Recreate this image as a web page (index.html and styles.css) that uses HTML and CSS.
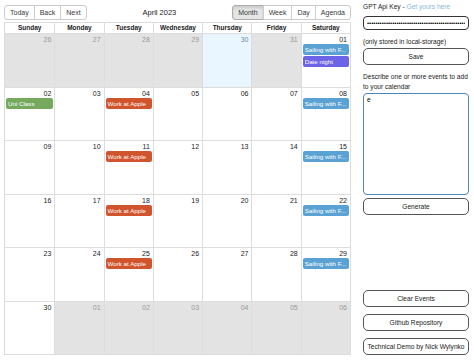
FILE: index.html
```html
<!DOCTYPE html>
<html>
<head>
    <title>GPT Calendar</title>
    <link rel="stylesheet" href="styles.css">
</head>
<body>

<div class="app">
    <div class="calendar">
        <div class="toolbar">
            <span class="btn-group">
                <button>Today</button><button>Back</button><button>Next</button>
            </span>
            <span class="toolbar-label">April 2023</span>
            <span class="btn-group">
                <button class="active">Month</button><button>Week</button><button>Day</button><button>Agenda</button>
            </span>
        </div>

        <div class="month">
            <div class="month-header">
                <div>Sunday</div><div>Monday</div><div>Tuesday</div><div>Wednesday</div>
                <div>Thursday</div><div>Friday</div><div>Saturday</div>
            </div>

            <div class="month-row">
                <div class="day off"><div class="date">26</div></div>
                <div class="day off"><div class="date">27</div></div>
                <div class="day off"><div class="date">28</div></div>
                <div class="day off"><div class="date">29</div></div>
                <div class="day off today"><div class="date">30</div></div>
                <div class="day off"><div class="date">31</div></div>
                <div class="day">
                    <div class="date">01</div>
                    <div class="event sailing" title="Sailing with Friends">Sailing with F...</div>
                    <div class="event date-night">Date night</div>
                </div>
            </div>

            <div class="month-row">
                <div class="day"><div class="date">02</div><div class="event uni">Uni Class</div></div>
                <div class="day"><div class="date">03</div></div>
                <div class="day"><div class="date">04</div><div class="event work">Work at Apple</div></div>
                <div class="day"><div class="date">05</div></div>
                <div class="day"><div class="date">06</div></div>
                <div class="day"><div class="date">07</div></div>
                <div class="day"><div class="date">08</div><div class="event sailing" title="Sailing with Friends">Sailing with F...</div></div>
            </div>

            <div class="month-row">
                <div class="day"><div class="date">09</div></div>
                <div class="day"><div class="date">10</div></div>
                <div class="day"><div class="date">11</div><div class="event work">Work at Apple</div></div>
                <div class="day"><div class="date">12</div></div>
                <div class="day"><div class="date">13</div></div>
                <div class="day"><div class="date">14</div></div>
                <div class="day"><div class="date">15</div><div class="event sailing" title="Sailing with Friends">Sailing with F...</div></div>
            </div>

            <div class="month-row">
                <div class="day"><div class="date">16</div></div>
                <div class="day"><div class="date">17</div></div>
                <div class="day"><div class="date">18</div><div class="event work">Work at Apple</div></div>
                <div class="day"><div class="date">19</div></div>
                <div class="day"><div class="date">20</div></div>
                <div class="day"><div class="date">21</div></div>
                <div class="day"><div class="date">22</div><div class="event sailing" title="Sailing with Friends">Sailing with F...</div></div>
            </div>

            <div class="month-row">
                <div class="day"><div class="date">23</div></div>
                <div class="day"><div class="date">24</div></div>
                <div class="day"><div class="date">25</div><div class="event work">Work at Apple</div></div>
                <div class="day"><div class="date">26</div></div>
                <div class="day"><div class="date">27</div></div>
                <div class="day"><div class="date">28</div></div>
                <div class="day"><div class="date">29</div><div class="event sailing" title="Sailing with Friends">Sailing with F...</div></div>
            </div>

            <div class="month-row">
                <div class="day"><div class="date">30</div></div>
                <div class="day off"><div class="date">01</div></div>
                <div class="day off"><div class="date">02</div></div>
                <div class="day off"><div class="date">03</div></div>
                <div class="day off"><div class="date">04</div></div>
                <div class="day off"><div class="date">05</div></div>
                <div class="day off"><div class="date">06</div></div>
            </div>
        </div>
    </div>

    <div class="panel">
        <div class="key-label">GPT Api Key - <a href="#">Get yours here</a></div>
        <input class="key-input" type="password" value="sk-0000000000000000000000000000000000000000000000000000">
        <div class="note">(only stored in local-storage)</div>
        <button class="panel-btn save">Save</button>
        <div class="describe">Describe one or more events to add to your calendar</div>
        <textarea class="prompt">e</textarea>
        <button class="panel-btn generate">Generate</button>

        <div class="panel-bottom">
            <button class="panel-btn">Clear Events</button>
            <button class="panel-btn">Github Repository</button>
            <button class="panel-btn">Technical Demo by Nick Wylynko</button>
        </div>
    </div>
</div>

</body>
</html>
```

FILE: styles.css
```css
/* Page reset */
body {
    margin: 0;
    font-family: "Liberation Sans", Arial, sans-serif;
    color: #373a3c;
}

/* Two columns: calendar and side panel */
.app {
    display: flex;
    height: 100vh;
    box-sizing: border-box;
    padding: 2px 5px 5px 4px;
}

.calendar {
    flex: 0 0 347px;
    display: flex;
    flex-direction: column;
    padding-top: 3px;
}

/* Toolbar */
.toolbar {
    display: flex;
    align-items: center;
    margin-bottom: 2px;
}

.toolbar-label {
    flex: 1;
    text-align: center;
    font-size: 7.5px;
    color: #222;
}

.btn-group {
    display: inline-flex;
}

.btn-group button {
    height: 15px;
    padding: 0 5px;
    margin: 0 0 0 -1px;
    font-family: inherit;
    font-size: 7px;
    color: #373a3c;
    background: #fff;
    border: 1px solid #ccc;
    border-radius: 0;
}

.btn-group button:first-child {
    margin-left: 0;
    border-radius: 3px 0 0 3px;
}

.btn-group button:last-child {
    border-radius: 0 3px 3px 0;
}

.btn-group button.active {
    background: #e6e6e6;
    border-color: #adadad;
    box-shadow: inset 0 2px 3px rgba(0, 0, 0, 0.125);
}

/* Month grid */
.month {
    flex: 1;
    display: flex;
    flex-direction: column;
    border: 1px solid #ddd;
}

.month-header {
    display: grid;
    grid-template-columns: repeat(7, 1fr);
    height: 10px;
    border-bottom: 1px solid #ddd;
}

.month-header div {
    font-size: 6.5px;
    font-weight: bold;
    line-height: 10px;
    text-align: center;
    color: #222;
}

.month-header div + div {
    border-left: 1px solid #ddd;
}

.month-row {
    flex: 1;
    display: grid;
    grid-template-columns: repeat(7, 1fr);
    min-height: 0;
}

.month-row + .month-row {
    border-top: 1px solid #ddd;
}

.day {
    padding: 0 1px;
    min-width: 0;
    overflow: hidden;
}

.day + .day {
    border-left: 1px solid #ddd;
}

.day.off {
    background: #e3e3e3;
}

.day.off .date {
    color: #999;
}

.day.today {
    background: #eaf6ff;
}

.day.today .date {
    color: #6a8aa8;
}

.date {
    height: 10px;
    padding: 0 2px 0 0;
    font-size: 7px;
    line-height: 11px;
    text-align: right;
    color: #222;
}

/* Events */
.event {
    height: 11px;
    margin-bottom: 1px;
    padding: 0 2px;
    font-size: 6.2px;
    line-height: 11px;
    color: #fff;
    border-radius: 2px;
    white-space: nowrap;
    overflow: hidden;
}

.sailing {
    background-color: #5aa2d3;
}

.date-night {
    background-color: #6c63e6;
}

.uni {
    background-color: #74a95e;
}

.work {
    background-color: #d0542d;
}

/* Side panel */
.panel {
    flex: 1;
    display: flex;
    flex-direction: column;
    margin-left: 12px;
    font-size: 6.6px;
    color: #222;
}

.key-label {
    line-height: 10px;
}

.key-label a {
    color: #8ab6dc;
    text-decoration: none;
}

.key-input {
    box-sizing: border-box;
    height: 14px;
    margin: 4px 0 0;
    padding: 0 3px;
    font-size: 6px;
    border: 1px solid #333;
    border-radius: 4px;
}

.note {
    margin-top: 7px;
    line-height: 10px;
}

.panel-btn {
    box-sizing: border-box;
    height: 17px;
    padding: 0;
    font-family: inherit;
    font-size: 6.6px;
    color: #222;
    background: #fff;
    border: 1px solid #555;
    border-radius: 5px;
}

.save {
    margin-top: 1px;
}

.describe {
    margin-top: 7px;
    line-height: 10px;
}

.prompt {
    box-sizing: border-box;
    height: 102px;
    margin: 1px 0 0;
    padding: 2px 3px;
    font-family: inherit;
    font-size: 6.6px;
    resize: none;
    border: 1px solid #4f86bf;
    border-radius: 4px;
    outline: none;
}

.generate {
    margin-top: 3px;
}

.panel-bottom {
    margin-top: auto;
    display: flex;
    flex-direction: column;
    gap: 7px;
}
```
